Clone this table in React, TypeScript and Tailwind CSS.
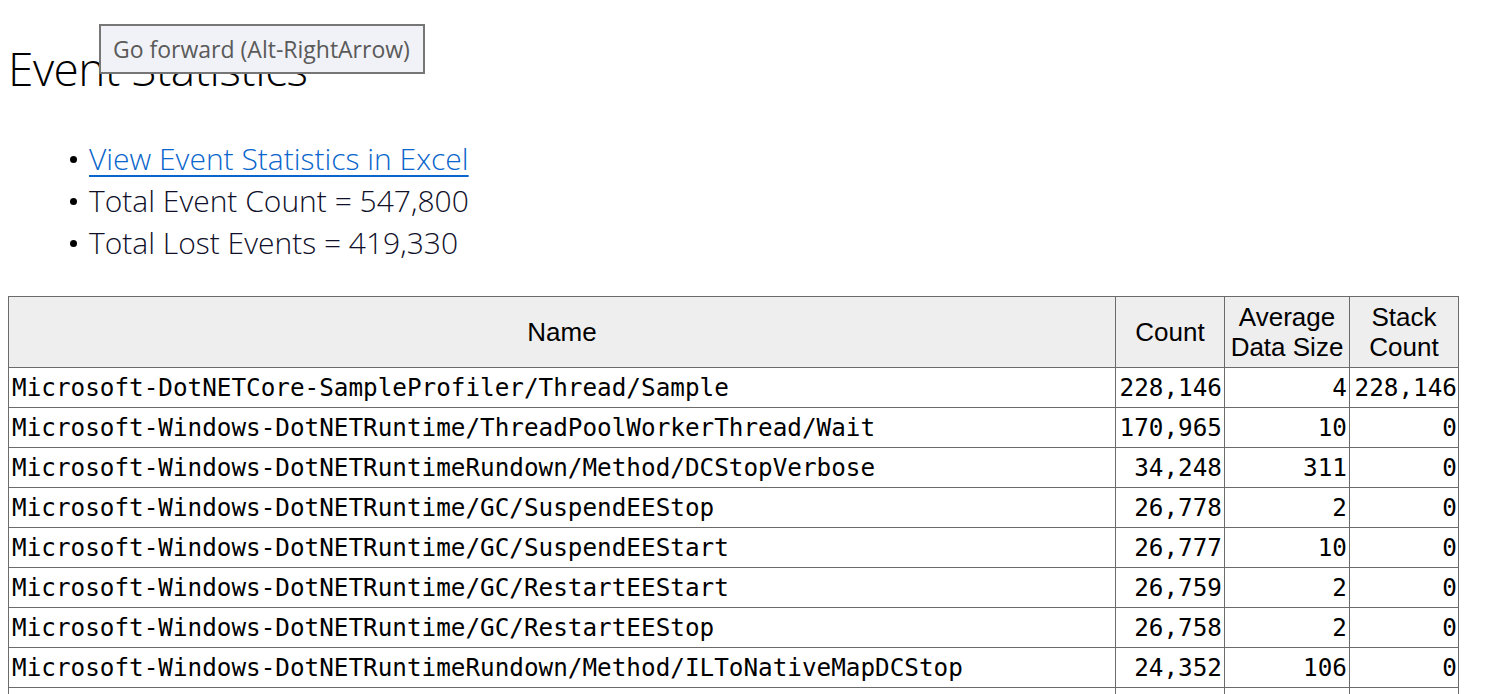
import React from "react";

const rows: [string, string, string, string][] = [
  ["Microsoft-DotNETCore-SampleProfiler/Thread/Sample", "228,146", "4", "228,146"],
  ["Microsoft-Windows-DotNETRuntime/ThreadPoolWorkerThread/Wait", "170,965", "10", "0"],
  ["Microsoft-Windows-DotNETRuntimeRundown/Method/DCStopVerbose", "34,248", "311", "0"],
  ["Microsoft-Windows-DotNETRuntime/GC/SuspendEEStop", "26,778", "2", "0"],
  ["Microsoft-Windows-DotNETRuntime/GC/SuspendEEStart", "26,777", "10", "0"],
  ["Microsoft-Windows-DotNETRuntime/GC/RestartEEStart", "26,759", "2", "0"],
  ["Microsoft-Windows-DotNETRuntime/GC/RestartEEStop", "26,758", "2", "0"],
  ["Microsoft-Windows-DotNETRuntimeRundown/Method/ILToNativeMapDCStop", "24,352", "106", "0"],
  ["\u00a0", "\u00a0", "\u00a0", "\u00a0"],
];

const prose = { fontFamily: '"Open Sans", "Noto Sans", sans-serif' };
const mono = { fontFamily: '"DejaVu Sans Mono", "Liberation Mono", monospace' };
const arial = { fontFamily: '"Liberation Sans", Arial, sans-serif' };

function Bullet() {
  return <span className="block w-[7px] h-[7px] rounded-full bg-black shrink-0" />;
}

export default function App() {
  return (
    <div className="relative bg-white min-h-screen pl-[8px] text-[#111]" style={prose}>
      <h1 className="text-[46px] font-light leading-[56px] pt-[40px] text-black tracking-[-0.5px]">
        Event Statistics
      </h1>
      <ul className="mt-[42px] pl-[62px] text-[30px] font-light leading-[42px] text-[#10102a]">
        <li className="flex items-center gap-[12px]">
          <Bullet />
          <a href="#" className="text-[#0a66cc] underline underline-offset-[5px] decoration-[2px]">
            View Event Statistics in Excel
          </a>
        </li>
        <li className="flex items-center gap-[12px]">
          <Bullet />
          <span>Total Event Count = 547,800</span>
        </li>
        <li className="flex items-center gap-[12px]">
          <Bullet />
          <span>Total Lost Events = 419,330</span>
        </li>
      </ul>
      <table className="mt-[32px] border-collapse table-fixed w-[1450px] text-black">
        <colgroup>
          <col className="w-[1107px]" />
          <col className="w-[109px]" />
          <col className="w-[125px]" />
          <col className="w-[109px]" />
        </colgroup>
        <thead>
          <tr className="bg-[#eeeeee]" style={arial}>
            <th className="border border-[#6b6b6b] font-normal text-[26px] leading-[30px] py-[5px] px-[2px] text-center">Name</th>
            <th className="border border-[#6b6b6b] font-normal text-[26px] leading-[30px] py-[5px] px-[2px] text-center">Count</th>
            <th className="border border-[#6b6b6b] font-normal text-[26px] leading-[30px] py-[5px] px-[2px] text-center">Average Data Size</th>
            <th className="border border-[#6b6b6b] font-normal text-[26px] leading-[30px] py-[5px] px-[2px] text-center">Stack Count</th>
          </tr>
        </thead>
        <tbody style={mono}>
          {rows.map((r, i) => (
            <tr key={i}>
              <td className="border border-[#6b6b6b] text-[24.3px] leading-[35px] py-[2px] pl-[3px] pr-[2px] whitespace-nowrap">{r[0]}</td>
              <td className="border border-[#6b6b6b] text-[24.3px] leading-[35px] py-[2px] px-[2px] text-right whitespace-nowrap">{r[1]}</td>
              <td className="border border-[#6b6b6b] text-[24.3px] leading-[35px] py-[2px] px-[2px] text-right whitespace-nowrap">{r[2]}</td>
              <td className="border border-[#6b6b6b] text-[24.3px] leading-[35px] py-[2px] px-[1px] text-right whitespace-nowrap">{r[3]}</td>
            </tr>
          ))}
        </tbody>
      </table>
      <div className="absolute left-[99px] top-[24px] w-[326px] h-[50px] bg-[#f1f2f7] border-2 border-[#767676] flex items-center pl-[12px] text-[23px] text-[#5a5a5a] whitespace-nowrap">
        Go forward (Alt-RightArrow)
      </div>
    </div>
  );
}
